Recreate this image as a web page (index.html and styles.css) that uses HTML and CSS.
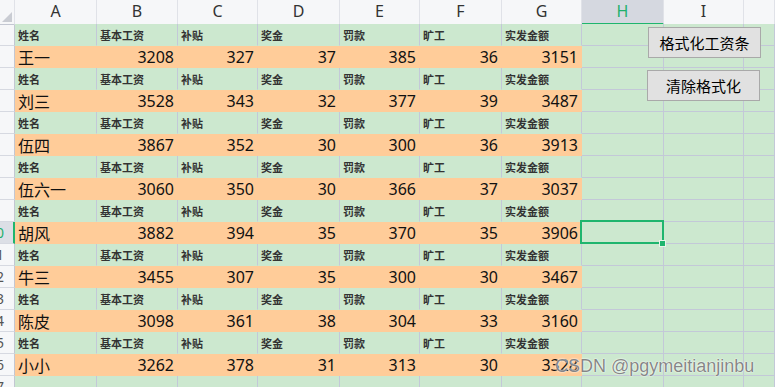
FILE: index.html
```html
<!DOCTYPE html>
<html lang="zh-CN">
<head>
  <meta charset="UTF-8" />
  <meta name="viewport" content="width=device-width, initial-scale=1.0"/>
  <title>工资条</title>
  <link rel="stylesheet" href="styles.css">
</head>
<body>
<div class="sheet">
  <div class="row col-head">
    <div class="corner"></div>
    <div class="col">A</div>
    <div class="col">B</div>
    <div class="col">C</div>
    <div class="col">D</div>
    <div class="col">E</div>
    <div class="col">F</div>
    <div class="col">G</div>
    <div class="col active">H</div>
    <div class="col">I</div>
    <div class="col"></div>
  </div>

  <div class="row label"><div class="rh"><span>1</span></div><div class="c">姓名</div><div class="c">基本工资</div><div class="c">补贴</div><div class="c">奖金</div><div class="c">罚款</div><div class="c">旷工</div><div class="c">实发金额</div><div class="c blank"></div><div class="c blank"></div><div class="c blank"></div></div>
  <div class="row data"><div class="rh"><span>2</span></div><div class="c">王一</div><div class="c num">3208</div><div class="c num">327</div><div class="c num">37</div><div class="c num">385</div><div class="c num">36</div><div class="c num">3151</div><div class="c blank"></div><div class="c blank"></div><div class="c blank"></div></div>

  <div class="row label"><div class="rh"><span>3</span></div><div class="c">姓名</div><div class="c">基本工资</div><div class="c">补贴</div><div class="c">奖金</div><div class="c">罚款</div><div class="c">旷工</div><div class="c">实发金额</div><div class="c blank"></div><div class="c blank"></div><div class="c blank"></div></div>
  <div class="row data"><div class="rh"><span>4</span></div><div class="c">刘三</div><div class="c num">3528</div><div class="c num">343</div><div class="c num">32</div><div class="c num">377</div><div class="c num">39</div><div class="c num">3487</div><div class="c blank"></div><div class="c blank"></div><div class="c blank"></div></div>

  <div class="row label"><div class="rh"><span>5</span></div><div class="c">姓名</div><div class="c">基本工资</div><div class="c">补贴</div><div class="c">奖金</div><div class="c">罚款</div><div class="c">旷工</div><div class="c">实发金额</div><div class="c blank"></div><div class="c blank"></div><div class="c blank"></div></div>
  <div class="row data"><div class="rh"><span>6</span></div><div class="c">伍四</div><div class="c num">3867</div><div class="c num">352</div><div class="c num">30</div><div class="c num">300</div><div class="c num">36</div><div class="c num">3913</div><div class="c blank"></div><div class="c blank"></div><div class="c blank"></div></div>

  <div class="row label"><div class="rh"><span>7</span></div><div class="c">姓名</div><div class="c">基本工资</div><div class="c">补贴</div><div class="c">奖金</div><div class="c">罚款</div><div class="c">旷工</div><div class="c">实发金额</div><div class="c blank"></div><div class="c blank"></div><div class="c blank"></div></div>
  <div class="row data"><div class="rh"><span>8</span></div><div class="c">伍六一</div><div class="c num">3060</div><div class="c num">350</div><div class="c num">30</div><div class="c num">366</div><div class="c num">37</div><div class="c num">3037</div><div class="c blank"></div><div class="c blank"></div><div class="c blank"></div></div>

  <div class="row label"><div class="rh"><span>9</span></div><div class="c">姓名</div><div class="c">基本工资</div><div class="c">补贴</div><div class="c">奖金</div><div class="c">罚款</div><div class="c">旷工</div><div class="c">实发金额</div><div class="c blank"></div><div class="c blank"></div><div class="c blank"></div></div>
  <div class="row data"><div class="rh active"><span>10</span></div><div class="c">胡风</div><div class="c num">3882</div><div class="c num">394</div><div class="c num">35</div><div class="c num">370</div><div class="c num">35</div><div class="c num">3906</div><div class="c blank selected"></div><div class="c blank"></div><div class="c blank"></div></div>

  <div class="row label"><div class="rh"><span>11</span></div><div class="c">姓名</div><div class="c">基本工资</div><div class="c">补贴</div><div class="c">奖金</div><div class="c">罚款</div><div class="c">旷工</div><div class="c">实发金额</div><div class="c blank"></div><div class="c blank"></div><div class="c blank"></div></div>
  <div class="row data"><div class="rh"><span>12</span></div><div class="c">牛三</div><div class="c num">3455</div><div class="c num">307</div><div class="c num">35</div><div class="c num">300</div><div class="c num">30</div><div class="c num">3467</div><div class="c blank"></div><div class="c blank"></div><div class="c blank"></div></div>

  <div class="row label"><div class="rh"><span>13</span></div><div class="c">姓名</div><div class="c">基本工资</div><div class="c">补贴</div><div class="c">奖金</div><div class="c">罚款</div><div class="c">旷工</div><div class="c">实发金额</div><div class="c blank"></div><div class="c blank"></div><div class="c blank"></div></div>
  <div class="row data"><div class="rh"><span>14</span></div><div class="c">陈皮</div><div class="c num">3098</div><div class="c num">361</div><div class="c num">38</div><div class="c num">304</div><div class="c num">33</div><div class="c num">3160</div><div class="c blank"></div><div class="c blank"></div><div class="c blank"></div></div>

  <div class="row label"><div class="rh"><span>15</span></div><div class="c">姓名</div><div class="c">基本工资</div><div class="c">补贴</div><div class="c">奖金</div><div class="c">罚款</div><div class="c">旷工</div><div class="c">实发金额</div><div class="c blank"></div><div class="c blank"></div><div class="c blank"></div></div>
  <div class="row data"><div class="rh"><span>16</span></div><div class="c">小小</div><div class="c num">3262</div><div class="c num">378</div><div class="c num">31</div><div class="c num">313</div><div class="c num">30</div><div class="c num">3328</div><div class="c blank"></div><div class="c blank"></div><div class="c blank"></div></div>

  <div class="row"><div class="rh"><span>17</span></div><div class="c blank"></div><div class="c blank"></div><div class="c blank"></div><div class="c blank"></div><div class="c blank"></div><div class="c blank"></div><div class="c blank"></div><div class="c blank"></div><div class="c blank"></div><div class="c blank"></div></div>

  <!-- form buttons placed on the sheet -->
  <button class="sheet-btn btn-format" type="button">格式化工资条</button>
  <button class="sheet-btn btn-clear" type="button">清除格式化</button>

  <div class="watermark">CSDN @pgymeitianjinbu</div>
</div>
</body>
</html>
```

FILE: styles.css
```css
body {
  margin: 0;
  padding: 0;
  background-color: #cce8cf;
  font-family: "Noto Sans", "Noto Sans CJK SC", sans-serif;
  overflow: hidden;
}

.sheet {
  position: relative;
  width: 775px;
  height: 387px;
  overflow: hidden;
}

.row {
  display: grid;
  grid-template-columns: 15px 82px 81px 80px 82px 80px 82px 80px 82px 80px 1fr;
  height: 22px;
}

.row > div {
  box-sizing: border-box;
  border-right: 1px solid #c3c8d8;
  border-bottom: 1px solid #c3c8d8;
}

/* column letters */
.col-head {
  height: 24px;
  background-color: #f6f7f9;
}

.col-head > div {
  border-right-color: #e0e2e8;
  border-bottom-color: #c3c7d2;
  font-size: 16px;
  color: #333;
  text-align: center;
  line-height: 23px;
}

.col-head .col.active {
  background-color: #d5d8e0;
  color: #1fb06c;
  border-bottom: 2px solid #1fb56e;
}

.corner {
  position: relative;
}

.corner::after {
  content: "";
  position: absolute;
  right: 2px;
  bottom: 2px;
  border-style: solid;
  border-width: 0 0 10px 10px;
  border-color: transparent transparent #c9ccd3 transparent;
}

/* row numbers, scrolled so only the right part shows */
.rh {
  background-color: #f6f7f9;
  border-right-color: #c3c7d2 !important;
  border-bottom-color: #d6d9e1 !important;
  overflow: hidden;
  font-size: 14px;
  color: #555;
  line-height: 21px;
}

.rh span {
  display: block;
  width: 40px;
  margin-left: -24px;
  text-align: center;
}

.rh.active {
  background-color: #dcdfe6;
  color: #1fb06c;
  border-right: 2px solid #1fb56e !important;
}

/* cells */
.c {
  display: flex;
  align-items: center;
  padding: 1px 3px 0;
  white-space: nowrap;
  overflow: hidden;
  background-color: #cce8cf;
}

.label .c {
  font-size: 11px;
  font-weight: bold;
  color: #333;
  border-bottom-color: #cce8cf;
}

.data .c {
  font-size: 16px;
  color: #111;
  background-color: #ffcc99;
  border-color: #ffcc99;
}

.c.num {
  justify-content: flex-end;
}

.label .c.blank,
.data .c.blank,
.c.blank {
  background-color: #cce8cf;
  border-right-color: #c3c8d8;
  border-bottom-color: #c3c8d8;
}

.c.selected {
  position: relative;
  overflow: visible;
  z-index: 1;
}

.c.selected::before {
  content: "";
  position: absolute;
  top: -2px;
  left: -2px;
  right: -1px;
  bottom: -1px;
  border: 2px solid #1fb56e;
}

.c.selected::after {
  content: "";
  position: absolute;
  right: -3px;
  bottom: -4px;
  width: 5px;
  height: 5px;
  background-color: #1fb56e;
  border: 1px solid #e8f5ea;
}

/* form buttons floating over the grid */
.sheet-btn {
  position: absolute;
  height: 31px;
  padding: 0;
  font-family: "Noto Sans CJK SC", sans-serif;
  font-size: 15px;
  color: #000;
  background-color: #e1e1e1;
  border: 1px solid #a9a9a9;
}

.btn-format {
  left: 648px;
  top: 27px;
  width: 113px;
}

.btn-clear {
  left: 647px;
  top: 70px;
  width: 113px;
}

.watermark {
  position: absolute;
  left: 555px;
  top: 356px;
  z-index: 2;
  font-family: "Liberation Sans", sans-serif;
  font-size: 18px;
  color: rgba(95, 95, 95, 0.75);
  text-shadow: 0 0 2px #fff, 0 0 1px #fff;
  white-space: nowrap;
}
```
